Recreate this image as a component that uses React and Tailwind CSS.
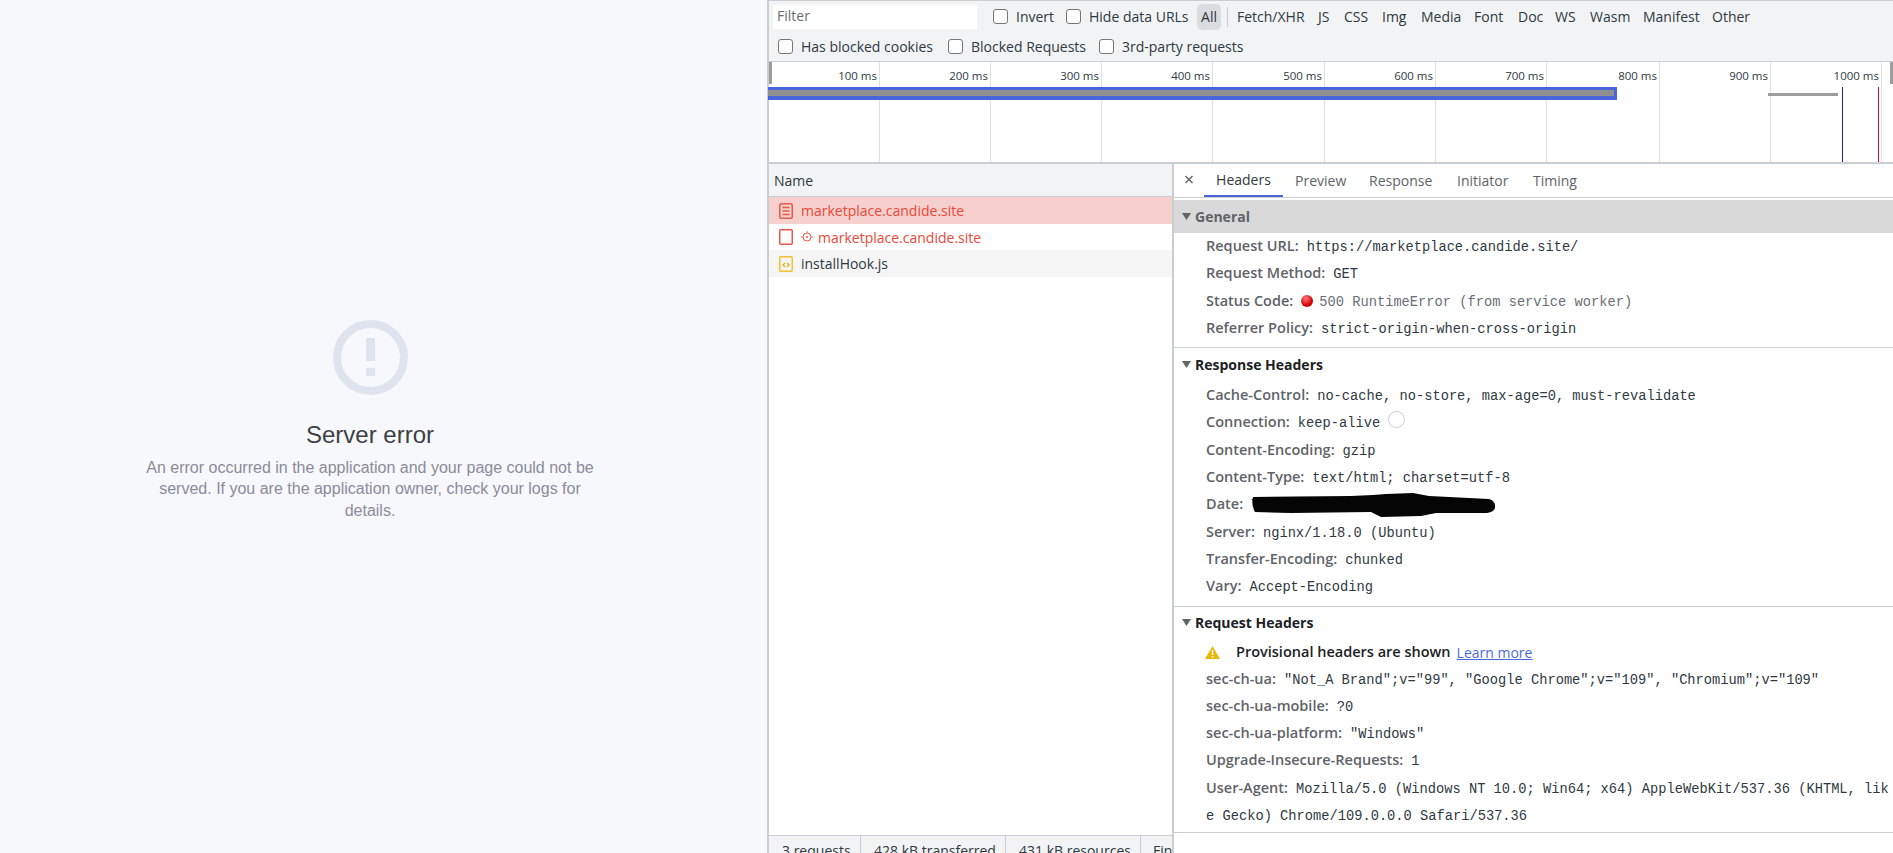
import React from "react";

function Check() {
  return <input type="checkbox" readOnly className="appearance-none w-[15px] h-[15px] shrink-0 border border-[#767676] rounded-[3px] bg-white" />;
}

const filters = [
  ["Fetch/XHR", 81], ["JS", 26], ["CSS", 38], ["Img", 39], ["Media", 53], ["Font", 44],
  ["Doc", 37], ["WS", 35], ["Wasm", 53], ["Manifest", 69], ["Other", 40],
];
const ticks = [
  ["100 ms", 111], ["200 ms", 111], ["300 ms", 111], ["400 ms", 111], ["500 ms", 112],
  ["600 ms", 111], ["700 ms", 111], ["800 ms", 113], ["900 ms", 111], ["1000 ms", 111],
];

function Arrow() {
  return (
    <svg width="9" height="7" viewBox="0 0 9 7" className="shrink-0">
      <polygon points="0,0 9,0 4.5,7" fill="#5f6368" />
    </svg>
  );
}

function SectionTitle({ children }) {
  return (
    <div className="h-[33px] pb-[1px] pl-[8px] flex items-center gap-[4px] font-bold text-[14px] text-[#202124]">
      <Arrow />
      <span>{children}</span>
    </div>
  );
}

function Row({ name, children }) {
  return (
    <div className="pl-[32px] leading-[27.3px] break-all">
      <span className="font-semibold text-[14.5px] leading-[16px] text-[#5f6368] mr-[8px]">{name}:</span>
      <span className="font-['Liberation_Mono',monospace] text-[13.72px] leading-[16px] text-[#303942]">{children}</span>
    </div>
  );
}

function DocIcon() {
  return (
    <svg width="14" height="16" viewBox="0 0 14 16" fill="none" className="shrink-0">
      <rect x="0.75" y="0.75" width="12.5" height="14.5" rx="1.5" stroke="#e9584a" strokeWidth="1.5" />
      <path d="M3.5 4.5h7M3.5 8h7M3.5 11.5h7" stroke="#e9584a" strokeWidth="1.3" />
    </svg>
  );
}
function BlankIcon() {
  return (
    <svg width="14" height="16" viewBox="0 0 14 16" fill="none" className="shrink-0">
      <rect x="0.75" y="0.75" width="12.5" height="14.5" rx="1" stroke="#e9584a" strokeWidth="1.5" />
    </svg>
  );
}
function JsIcon() {
  return (
    <svg width="14" height="16" viewBox="0 0 14 16" fill="none" className="shrink-0">
      <rect x="0.75" y="0.75" width="12.5" height="14.5" rx="1" stroke="#f2c230" strokeWidth="1.5" />
      <path d="M6 7 4 9l2 2M8 7l2 2-2 2" stroke="#eba90f" strokeWidth="1.2" />
    </svg>
  );
}
function FailIcon() {
  return (
    <svg width="12" height="12" viewBox="0 0 12 12" fill="none" className="shrink-0 block">
      <circle cx="6" cy="6" r="4" stroke="#e9584a" strokeWidth="1" />
      <circle cx="6" cy="6" r="1" fill="#e9584a" />
      <path d="M6 0.2v1.6M0.2 6h1.6M10.2 6h1.6" stroke="#e9584a" strokeWidth="1" />
    </svg>
  );
}

export default function App() {
  return (
    <div className="flex w-[1893px] h-[853px] overflow-hidden bg-white font-['Open_Sans',sans-serif] text-[14px] text-[#303942]">
      {/* page */}
      <div className="w-[767px] shrink-0 bg-[#f7f8fc] pr-[27px] pt-[320px] flex flex-col items-center font-['Liberation_Sans',sans-serif]">
        <svg width="75" height="75" viewBox="0 0 75 75" fill="none">
          <circle cx="37.5" cy="37.5" r="33.5" stroke="#dfe3ee" strokeWidth="8" />
          <rect x="33" y="18" width="9" height="23" fill="#dfe3ee" />
          <rect x="33" y="48" width="9" height="8" fill="#dfe3ee" />
        </svg>
        <h1 className="mt-[25px] text-[24px] leading-[30px] text-[#3f3f46]">Server error</h1>
        <p className="mt-[7px] w-[460px] text-center text-[16px] leading-[21.3px] text-[#8b8b99]">
          An error occurred in the application and your page could not be served. If you are the application owner, check your logs for details.
        </p>
      </div>

      {/* devtools */}
      <div className="flex-1 min-w-0 border-l-2 border-[#cacdd1] flex flex-col">
        {/* toolbar */}
        <div className="h-[62px] shrink-0 bg-[#f1f3f4] border-t border-b border-[#cacdd1]">
          <div className="flex items-center h-[29px] mt-[1px]">
            <div className="ml-[4px] w-[204px] h-[24px] bg-white pl-[4px] leading-[22px] text-[#6b6f75]">Filter</div>
            <div className="ml-[16px] flex items-center gap-[8px] w-[73px]"><Check /><span>Invert</span></div>
            <div className="flex items-center gap-[8px] w-[131px]"><Check /><span>Hide data URLs</span></div>
            <div className="w-[24px] h-[26px] rounded-[5px] bg-[#dadce0] flex items-center justify-center">All</div>
            <div className="ml-[6px] w-px h-[20px] bg-[#cacdd1]" />
            <div className="ml-[9px] flex">
              {filters.map(([label, w]) => (
                <span key={label} className="whitespace-nowrap" style={{ width: w }}>{label}</span>
              ))}
            </div>
          </div>
          <div className="flex items-center h-[28px] mt-[1px] pl-[9px]">
            <div className="flex items-center gap-[8px] w-[170px]"><Check /><span>Has blocked cookies</span></div>
            <div className="flex items-center gap-[8px] w-[151px]"><Check /><span>Blocked Requests</span></div>
            <div className="flex items-center gap-[8px]"><Check /><span>3rd-party requests</span></div>
          </div>
        </div>

        {/* overview */}
        <div className="relative h-[102px] shrink-0 border-b-2 border-[#cacdd1] bg-white flex text-[11.5px] text-[#303942]">
          {ticks.map(([t, w]) => (
            <div key={t} className="h-full border-r border-[#e0e0e0] pr-[2px] pt-[4px] text-right leading-[20px] shrink-0" style={{ width: w }}>{t}</div>
          ))}
          <div className="absolute left-0 top-0 w-[3px] h-[22px] bg-[#9c9c9c]" />
          <div className="absolute left-[1121px] top-0 w-[3px] h-[22px] bg-[#9c9c9c]" />
          <div className="absolute left-[-1px] top-[25px] w-[849px] h-[13px] bg-[#8f8f8f] border-t-[3px] border-b-[4px] border-r-[3px] border-[#4a64dc]" />
          <div className="absolute left-[999px] top-[31px] w-[70px] h-[3px] bg-[#9c9c9c]" />
          <div className="absolute left-[1073px] top-[25px] w-px h-[75px] bg-[#3a12c4]" />
          <div className="absolute left-[1109px] top-[25px] w-px h-[75px] bg-[#c5102a]" />
        </div>

        {/* split */}
        <div className="flex-1 min-h-0 flex">
          {/* name column */}
          <div className="w-[403px] shrink-0 flex flex-col">
            <div className="h-[33px] shrink-0 bg-[#f1f3f4] border-b border-[#cacdd1] pl-[5px] flex items-center">Name</div>
            <div className="h-[27px] shrink-0 bg-[#f5d0cc] flex items-center pl-[10px] text-[#e9483a]">
              <DocIcon /><span className="ml-[8px]">marketplace.candide.site</span>
            </div>
            <div className="h-[26px] shrink-0 flex items-center pl-[10px] text-[#e9483a]">
              <BlankIcon /><span className="ml-[8px]"><FailIcon /></span><span className="ml-[5px]">marketplace.candide.site</span>
            </div>
            <div className="h-[27px] shrink-0 bg-[#f5f5f5] flex items-center pl-[10px]">
              <JsIcon /><span className="ml-[8px]">installHook.js</span>
            </div>
            <div className="flex-1" />
            <div className="h-[18px] shrink-0 bg-[#f1f3f4] border-t border-[#cacdd1] overflow-hidden flex text-[#303942] whitespace-nowrap">
              <span className="w-[92px] pl-[13px] pt-[5px] leading-[20px] border-r border-[#cacdd1] shrink-0">3 requests</span>
              <span className="w-[145px] pl-[13px] pt-[5px] leading-[20px] border-r border-[#cacdd1] shrink-0">428 kB transferred</span>
              <span className="w-[135px] pl-[13px] pt-[5px] leading-[20px] border-r border-[#cacdd1] shrink-0">431 kB resources</span>
              <span className="pl-[12px] pt-[5px] leading-[20px] overflow-hidden">Finish</span>
            </div>
          </div>

          {/* details */}
          <div className="flex-1 min-w-0 border-l-2 border-[#cacdd1] overflow-hidden">
            <div className="h-[34px] bg-white border-b border-[#cacdd1] flex items-stretch text-[#5f6368]">
              <svg width="30" height="33" viewBox="0 0 30 33" fill="none" className="shrink-0">
                <path d="M11.5 12l7 7M18.5 12l-7 7" stroke="#5f6368" strokeWidth="1.4" />
              </svg>
              <div className="w-[79px] shrink-0 border-b-2 border-[#4a64dc] flex items-center justify-center text-[#303942]">Headers</div>
              <div className="w-[86px] shrink-0 flex items-center pl-[12px]">Preview</div>
              <div className="w-[88px] shrink-0 flex items-center">Response</div>
              <div className="w-[76px] shrink-0 flex items-center">Initiator</div>
              <div className="flex items-center">Timing</div>
            </div>
            <div className="mt-[2px] h-[33px] bg-[#d9d9d9] pl-[8px] pb-[1px] flex items-center gap-[4px] font-bold text-[#5f6368]">
              <Arrow /><span>General</span>
            </div>
            <div className="border-b border-[#cacdd1] -mt-[1px] pb-[6px]">
              <Row name="Request URL">https://marketplace.candide.site/</Row>
              <Row name="Request Method">GET</Row>
              <Row name="Status Code">
                <span className="inline-block w-[12px] h-[12px] rounded-full bg-[radial-gradient(circle_at_40%_30%,#ff7b7b,#d40000_60%)] align-[-1px] mr-[6px]" />
                <span className="text-[#6b6f75]">500 RuntimeError (from service worker)</span>
              </Row>
              <Row name="Referrer Policy">strict-origin-when-cross-origin</Row>
            </div>

            <div className="border-b border-[#cacdd1] pb-[6px]">
              <SectionTitle>Response Headers</SectionTitle>
              <Row name="Cache-Control">no-cache, no-store, max-age=0, must-revalidate</Row>
              <Row name="Connection">
                keep-alive
                <span className="inline-block w-[17px] h-[17px] rounded-full border border-[#c8ccd9] bg-white ml-[8px] align-[-1px]" />
              </Row>
              <Row name="Content-Encoding">gzip</Row>
              <Row name="Content-Type">text/html; charset=utf-8</Row>
              <div className="relative">
                <Row name="Date">T</Row>
                <svg width="245" height="24" viewBox="0 0 245 24" className="absolute left-[77px] top-[3px]">
                  <path d="M2 4 L100 3 L122 2 L135 1 L162 0 L178 3 L238 6 Q245 8 244 15 Q243 19 236 20 L185 20 L170 23 L130 24 L120 19 L40 20 L4 19 Q0 12 2 4Z" fill="#050505" />
                </svg>
              </div>
              <Row name="Server">nginx/1.18.0 (Ubuntu)</Row>
              <Row name="Transfer-Encoding">chunked</Row>
              <Row name="Vary">Accept-Encoding</Row>
            </div>

            <div className="border-b border-[#cacdd1] pb-[4px]">
              <SectionTitle>Request Headers</SectionTitle>
              <div className="h-[25px] pl-[31px] flex items-center">
                <svg width="15" height="13" viewBox="0 0 15 13" className="shrink-0">
                  <polygon points="7.5,0 15,13 0,13" fill="#e9b80c" />
                  <rect x="6.8" y="4" width="1.5" height="5" fill="#fff" />
                  <rect x="6.8" y="10" width="1.5" height="1.5" fill="#fff" />
                </svg>
                <span className="ml-[16px] font-semibold text-[14.5px] text-[#202124]">Provisional headers are shown</span>
                <span className="ml-[6px] text-[#4a6be0] underline">Learn more</span>
              </div>
              <Row name="sec-ch-ua">{'"Not_A Brand";v="99", "Google Chrome";v="109", "Chromium";v="109"'}</Row>
              <Row name="sec-ch-ua-mobile">?0</Row>
              <Row name="sec-ch-ua-platform">"Windows"</Row>
              <Row name="Upgrade-Insecure-Requests">1</Row>
              <Row name="User-Agent">Mozilla/5.0 (Windows NT 10.0; Win64; x64) AppleWebKit/537.36 (KHTML, like Gecko) Chrome/109.0.0.0 Safari/537.36</Row>
            </div>
          </div>
        </div>
      </div>
    </div>
  );
}
